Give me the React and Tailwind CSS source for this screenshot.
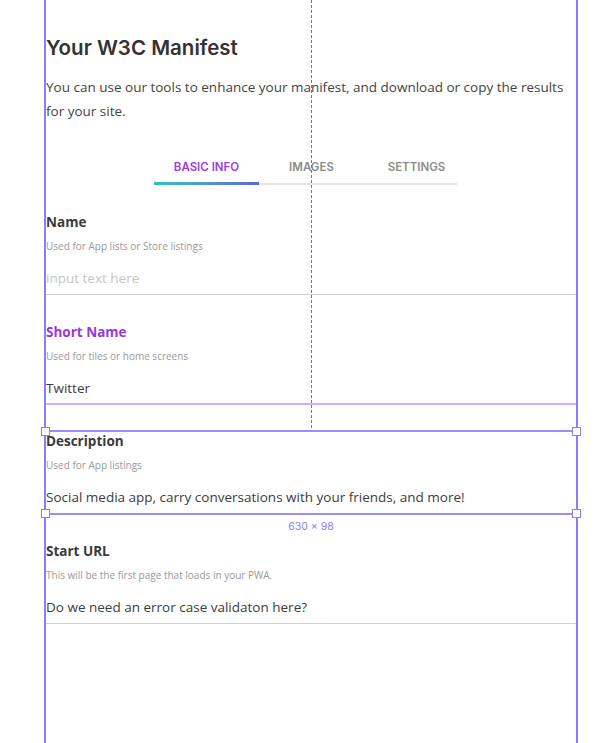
import React from "react";

const fields = [
  {
    label: "Name",
    hint: "Used for App lists or Store listings",
    value: "",
    placeholder: "input text here",
  },
  {
    label: "Short Name",
    hint: "Used for tiles or home screens",
    value: "Twitter",
    focused: true,
  },
  {
    label: "Description",
    hint: "Used for App listings",
    value: "Social media app, carry conversations with your friends, and more!",
  },
  {
    label: "Start URL",
    hint: "This will be the first page that loads in your PWA.",
    value: "Do we need an error case validaton here?",
  },
];

function Field({ label, hint, value, placeholder, focused }) {
  return (
    <div className="mt-[26.5px] first:mt-[27px]">
      <div
        className={
          "text-[13.5px] leading-[20px] font-bold " +
          (focused ? "text-[#9b35dc]" : "text-[#3a3a3a]")
        }
      >
        {label}
      </div>
      <div className="mt-[6px] text-[10px] leading-[16px] text-[#9a9a9a]">{hint}</div>
      <div
        className={
          "mt-[14px] " +
          (focused ? "pb-[5px] border-b-2 border-[#cfb0f4]" : "pb-[6px] border-b border-[#d0d0d0]")
        }
      >
        <input
          readOnly
          value={value}
          placeholder={placeholder}
          className="block w-full bg-transparent p-0 text-[13.5px] leading-[20px] h-[20px] text-[#3c3c3c] placeholder:text-[#c6c6c6] outline-none"
        />
      </div>
    </div>
  );
}

function Tabs() {
  const tabs = ["BASIC INFO", "IMAGES", "SETTINGS"];
  return (
    <div className="ml-[108px] mt-[32px] w-[303px]">
      <div className="flex">
        {tabs.map((t, i) => (
          <div
            key={t}
            className={
              "w-[105px] shrink-0 text-center text-[11.5px] leading-[24px] font-semibold pb-[3px] " +
              (i === 0 ? "text-[#9b3ddf]" : "text-[#8c8c8c]")
            }
            style={{ fontFamily: "Inter, 'Noto Sans', sans-serif" }}
          >
            {t}
          </div>
        ))}
      </div>
      <div className="flex items-end h-[3px] bg-[linear-gradient(to_top,#e4e4e4_0px,#e4e4e4_2px,transparent_2px)]">
        <div className="w-[105px] h-[3px] bg-gradient-to-r from-[#2ec2c3] to-[#5d67d8]" />
      </div>
    </div>
  );
}

export default function App() {
  return (
    <div
      className="relative w-[604px] h-[743px] bg-white overflow-hidden"
      style={{ fontFamily: "'Open Sans', 'Noto Sans', sans-serif" }}
    >
      <div className="ml-[46px] w-[530px] pt-[34px]">
        <h1
          className="text-[20.5px] leading-[28px] font-semibold text-[#333333]"
          style={{ fontFamily: "Inter, 'Noto Sans', sans-serif" }}
        >
          Your W3C Manifest
        </h1>
        <p className="mt-[13px] text-[13.5px] leading-[24px] text-[#444444]">
          You can use our tools to enhance your manifest, and download or copy the results for your site.
        </p>
        <Tabs />
        <div>
          {fields.map((f) => (
            <Field key={f.label} {...f} />
          ))}
        </div>
      </div>

      {/* layout guide: center line */}
      <div className="absolute left-[311px] top-0 w-px h-[430px] bg-[repeating-linear-gradient(to_bottom,#1e8ef5_0px,#1e8ef5_3px,transparent_3px,transparent_5px)]" />

      {/* frame edges */}
      <div className="absolute left-[44px] top-0 w-[2px] h-full bg-[#8a7bff]" />
      <div className="absolute left-[576px] top-0 w-[2px] h-full bg-[#8a7bff]" />

      {/* selected element outline with resize handles */}
      <div className="absolute left-[44px] top-[430px] w-[534px] h-[85px] border-y-2 border-[#9a8cff]">
        <div className="absolute -left-[3px] -top-[5px] w-[9px] h-[9px] bg-white border-[1.5px] border-[#8a7bff]" />
        <div className="absolute -right-[3px] -top-[5px] w-[9px] h-[9px] bg-white border-[1.5px] border-[#8a7bff]" />
        <div className="absolute -left-[3px] -bottom-[5px] w-[9px] h-[9px] bg-white border-[1.5px] border-[#8a7bff]" />
        <div className="absolute -right-[3px] -bottom-[5px] w-[9px] h-[9px] bg-white border-[1.5px] border-[#8a7bff]" />
        <div
          className="absolute left-0 right-0 top-full mt-[6px] text-center text-[10.5px] leading-[16px] text-[#8a7bff]"
          style={{ fontFamily: "Inter, 'Noto Sans', sans-serif" }}
        >
          630 × 98
        </div>
      </div>
    </div>
  );
}
